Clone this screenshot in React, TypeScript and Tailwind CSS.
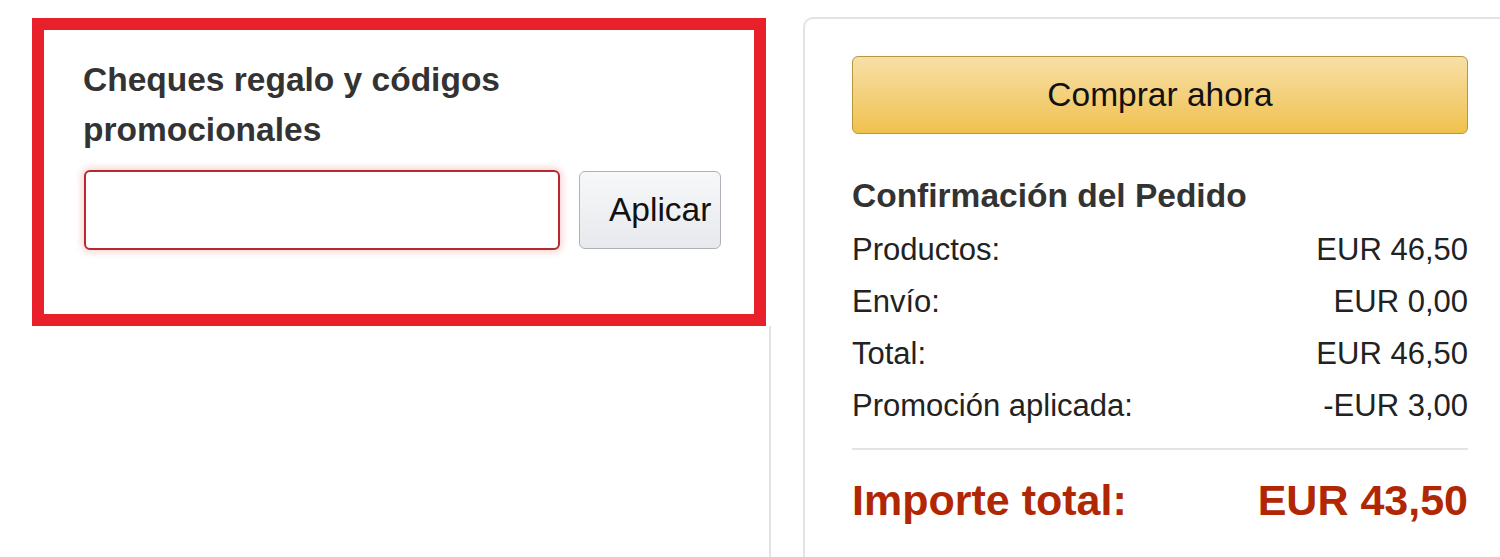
import React from "react";

const font = { fontFamily: '"Liberation Sans", Arial, Helvetica, sans-serif' };

const rows: [string, string][] = [
  ["Productos:", "EUR 46,50"],
  ["Envío:", "EUR 0,00"],
  ["Total:", "EUR 46,50"],
  ["Promoción aplicada:", "-EUR 3,00"],
];

export default function App() {
  return (
    <div
      className="flex h-[557px] w-[1500px] overflow-hidden bg-white text-[#111]"
      style={font}
    >
      {/* Left column */}
      <div className="flex w-[771px] shrink-0 flex-col">
        <div className="pl-[32px] pt-[18px]">
          <div className="h-[308px] w-[734px] border-[12px] border-[#e8202a] bg-white pl-[39px] pt-[25px]">
            <h2 className="text-[33.5px] font-bold leading-[50px] text-[#333]">
              Cheques regalo y códigos
              <br />
              promocionales
            </h2>
            <div className="ml-[1px] mt-[15px] flex items-start gap-[19px]">
              <input
                type="text"
                className="h-[80px] w-[476px] rounded-[6px] border-2 border-[#b3292d] bg-white shadow-[0_0_6px_3px_rgba(235,80,80,0.22)] outline-none"
              />
              <button className="mt-[1px] h-[78px] w-[142px] overflow-hidden whitespace-nowrap rounded-[6px] border-[1.5px] border-[#adb1b8] bg-gradient-to-b from-[#f7f8fa] to-[#e7e9ec] pl-[29px] text-left text-[33.5px] text-[#111]">
                Aplicar
              </button>
            </div>
          </div>
        </div>
        <div className="flex-1 border-r-2 border-[#e4e4e4]" />
      </div>

      {/* Right column */}
      <div className="flex-1 pl-[32px] pt-[17px]">
        <div className="h-[600px] w-[800px] rounded-tl-[10px] border-l-2 border-t-2 border-[#e3e3e3] pl-[47px] pt-[37px]">
          <div className="w-[616px]">
            <button className="flex h-[78px] w-[616px] items-center justify-center rounded-[6px] border-[1.5px] border-[#b8973e] bg-gradient-to-b from-[#f7dfa5] to-[#f0c14b] text-[33.5px] text-[#111]">
              Comprar ahora
            </button>
            <h3 className="mt-[40px] text-[33.5px] font-bold leading-[44px] text-[#333]">
              Confirmación del Pedido
            </h3>
            <div className="mt-[6px]">
              {rows.map(([k, v]) => (
                <div
                  key={k}
                  className="flex justify-between text-[31px] leading-[52px] text-[#222]"
                >
                  <span>{k}</span>
                  <span>{v}</span>
                </div>
              ))}
            </div>
            <div className="mt-[16px] h-[2px] bg-[#e3e3e3]" />
            <div className="mt-[22px] flex justify-between text-[43px] font-bold leading-[56px] text-[#b12704]">
              <span>Importe total:</span>
              <span>EUR 43,50</span>
            </div>
          </div>
        </div>
      </div>
    </div>
  );
}
